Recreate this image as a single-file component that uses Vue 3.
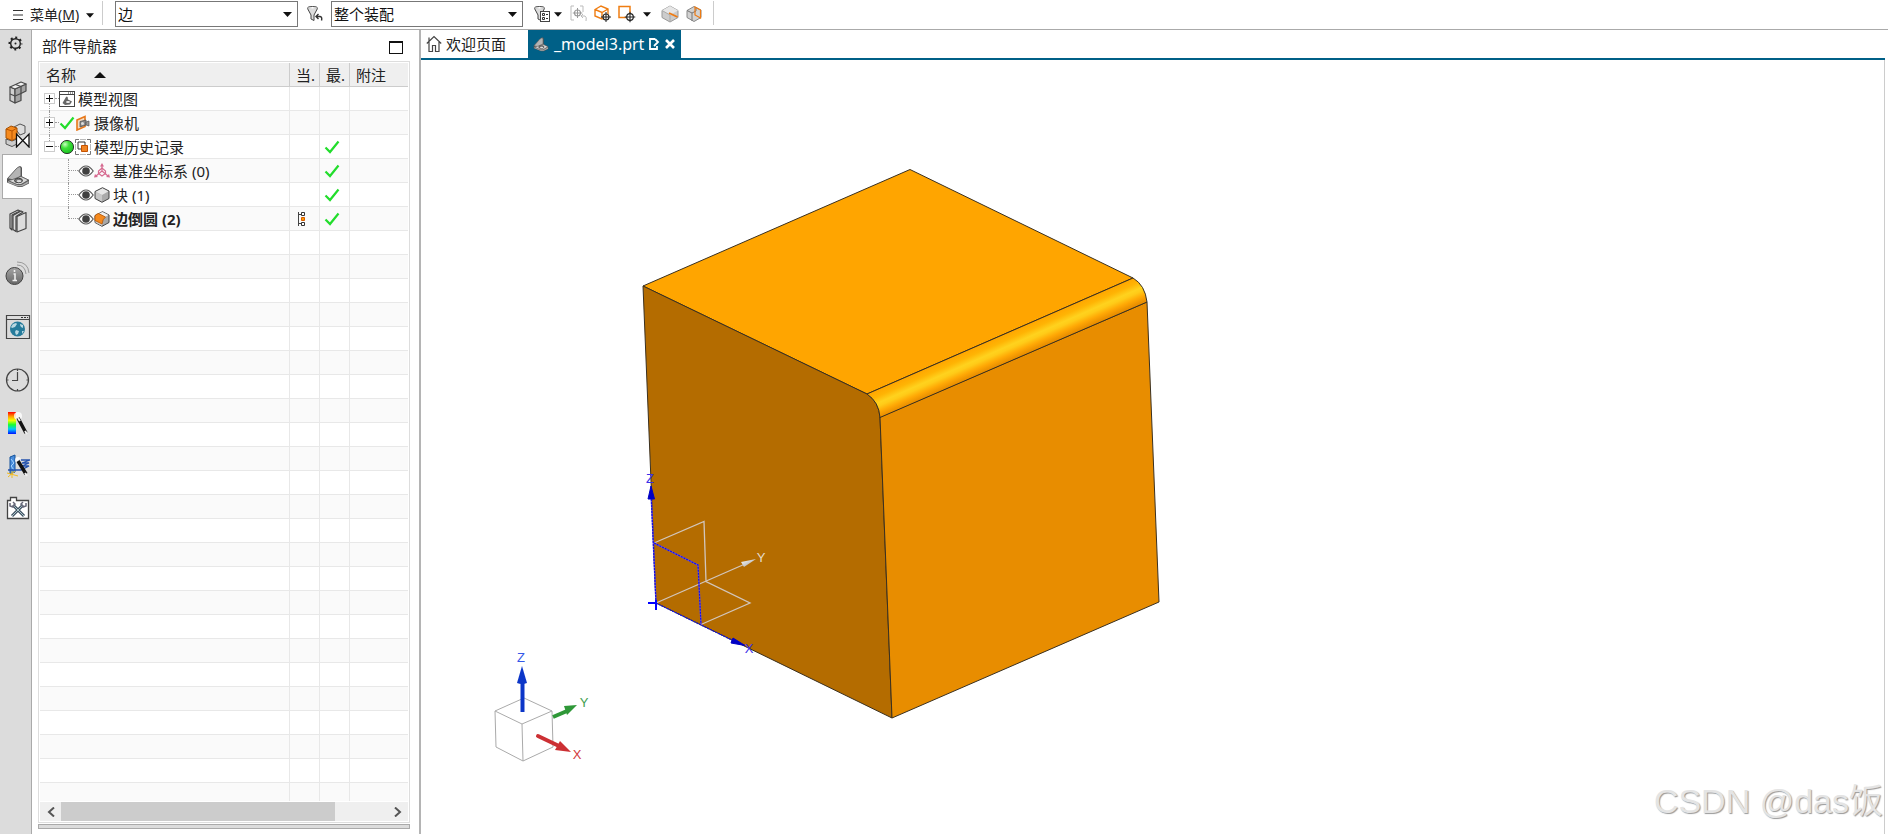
<script setup>
import { ref } from 'vue'

const selectionType = ref('边')
const scope = ref('整个装配')

const railItems = [
  { id: 'assembly', label: '装配导航器' },
  { id: 'constraint', label: '约束导航器' },
  { id: 'part', label: '部件导航器', active: true },
  { id: 'reuse', label: '重用库' },
  { id: 'info', label: '信息', gap: true },
  { id: 'web', label: '浏览器', gap: true },
  { id: 'history', label: '历史记录', gap: true },
  { id: 'visual', label: '可视化' },
  { id: 'studio', label: '工作室' },
  { id: 'roles', label: '角色' }
]

const rows = [
  { id: 1, label: '模型视图', level: 0, toggle: 'plus', icons: ['i-view'] },
  { id: 2, label: '摄像机', level: 0, toggle: 'plus', icons: ['i-check', 'i-camera'] },
  { id: 3, label: '模型历史记录', level: 0, toggle: 'minus', icons: ['i-ball', 'i-history'], latest: true },
  { id: 4, label: '基准坐标系 (0)', level: 1, icons: ['i-eye', 'i-csys'], latest: true },
  { id: 5, label: '块 (1)', level: 1, icons: ['i-eye', 'i-block'], latest: true },
  { id: 6, label: '边倒圆 (2)', level: 1, icons: ['i-eye', 'i-blend'], latest: true, current: true, last: true }
]
const emptyRows = 24
</script>

<template>
  <div class="app">
    <svg class="defs" aria-hidden="true">
      <defs>
        <radialGradient id="green" cx=".35" cy=".3" r=".75">
          <stop offset="0" stop-color="#c8ffc0" /><stop offset=".4" stop-color="#3fe03a" /><stop offset="1" stop-color="#18c020" />
        </radialGradient>
        <linearGradient id="rainbow" x1="0" y1="0" x2="0" y2="1">
          <stop offset="0" stop-color="#f00" /><stop offset=".2" stop-color="#ff9a00" /><stop offset=".38" stop-color="#f4ff00" />
          <stop offset=".58" stop-color="#18ff30" /><stop offset=".78" stop-color="#00c8ff" /><stop offset="1" stop-color="#0010ff" />
        </linearGradient>
        <linearGradient id="info" x1="0" y1="0" x2="0" y2="1">
          <stop offset="0" stop-color="#a5a5a5" /><stop offset="1" stop-color="#666" />
        </linearGradient>
      </defs>
      <symbol id="i-caret" viewBox="0 0 9 5"><path d="M0 0h9L4.500 5z" fill="#111" /></symbol>
      <symbol id="i-check" viewBox="0 0 16 16"><path d="M1.500 8.500 6 13 14.500 2.500" fill="none" stroke="#22dd2c" stroke-width="2.200" /></symbol>
      <symbol id="i-view" viewBox="0 0 16 16">
        <rect x=".5" y=".5" width="15" height="15" fill="#fff" stroke="#444" /><path d="M1 3.500h14" stroke="#444" />
        <path d="M9 2h1M11 2h1M13 2h1" stroke="#333" />
        <path d="M7 6Q9 4.500 9 8.500L13 10.500 11 13.500 6 14 3.500 12z" fill="#666" /><ellipse cx="9" cy="11" rx="2" ry="1" fill="#eee" />
      </symbol>
      <symbol id="i-camera" viewBox="0 0 16 16">
        <path d="M2 5 10 1.500v10L2 15z" fill="#f4dcc4" stroke="#e8781a" stroke-width="1.600" />
        <path d="M5 6.500 11 5v5L5 12z" fill="#888" stroke="#555" stroke-width=".8" /><path d="m11 7 3-1v5l-3-1z" fill="#999" stroke="#555" stroke-width=".7" />
        <circle cx="7.500" cy="8.500" r="1.500" fill="#ddd" />
      </symbol>
      <symbol id="i-ball" viewBox="0 0 16 16"><circle cx="8" cy="8" r="6.600" fill="url(#green)" stroke="#222" stroke-width=".9" /></symbol>
      <symbol id="i-history" viewBox="0 0 16 16">
        <path d="M.5 4V.500H4M12 .5h3.500V4M15.500 12v3.500H12M4 15.500H.5V12" fill="none" stroke="#777" /><path d="M5 .5h6M5 15.500h6M.5 5v6M15.500 5v6" stroke="#bbb" />
        <path d="M3 3h7v7H3z" fill="#fff" stroke="#333" /><path d="M6.500 6.500h6v6h-6z" fill="#f08424" stroke="#c65200" />
      </symbol>
      <symbol id="i-eye" viewBox="0 0 16 16">
        <path d="M.8 8Q8-2 15.200 8 8 18 .8 8z" fill="#fff" stroke="#555" stroke-width="1.200" /><circle cx="8" cy="8" r="3.800" fill="#404040" />
      </symbol>
      <symbol id="i-csys" viewBox="0 0 16 16">
        <g fill="none" stroke="#d66a90" stroke-width="1.200"><path d="M8 2v6L2 13M8 8l6 5" /><path d="M4.500 10.500V8L8 5l3.500 3v2.500L8 13z" /></g>
        <path d="m8 0 2 3.500H6zM0 14.500 1 11l3 3zM16 14.500 15 11l-3 3z" fill="#d66a90" />
      </symbol>
      <symbol id="i-block" viewBox="0 0 16 16">
        <path d="M1 4.500 8.500.7 15 4v7.500L8 15.300 1 11.500z" fill="#aaa" /><path d="M1 4.500 8.500.7 15 4 8 8z" fill="#e6e6e6" /><path d="M1 4.500 8 8v7.300L1 11.500z" fill="#c8c8c8" />
        <path d="M1 4.500 8.500.7 15 4v7.500L8 15.300 1 11.500z" fill="none" stroke="#444" />
      </symbol>
      <symbol id="i-blend" viewBox="0 0 16 16">
        <path d="M1 4.500 8.500.7 15 4v7.500L8 15.300 1 11.500z" fill="#a8a8a8" stroke="#444" /><path d="M5 2.500 8.500 1 14.500 4 11 6z" fill="#eee" /><path d="M1.500 9.500 8 13v2L1.500 11.500z" fill="#ccc" />
        <path d="M1 5Q2 3 4.500 2.500L11.500 6Q8.500 8 8 13L1 9.500z" fill="#f58a1e" stroke="#b85400" stroke-width=".8" />
      </symbol>
      <symbol id="i-bracket" viewBox="0 0 24 24">
        <path d="M1 15 12 3.500Q15 .8 16 4v8.500L23 16v3.500L16 23H12L1 18.500z" fill="#555" />
        <path d="M1.500 14.500 10 5Q14 1 15 4v8L7.500 16z" fill="#b4b4b4" stroke="#555" stroke-width=".8" /><path d="m15 12.500 7.500 3.500L15 20.500H11L2 16.500l4.500-1z" fill="#d8d8d8" stroke="#555" stroke-width=".8" />
        <path d="M2 17v1.500L11.500 22.300H16L22.500 19V17L15.500 21H11z" fill="#aaa" /><ellipse cx="12.500" cy="16.500" rx="4" ry="2.200" fill="#777" stroke="#444" /><ellipse cx="13" cy="17.200" rx="2.400" ry="1.100" fill="#ddd" />
      </symbol>
      <symbol id="i-target" viewBox="0 0 10 10"><circle cx="5" cy="5" r="3" fill="none" stroke="currentColor" stroke-width="1.100" /><path d="M5 0v10M0 5h10" stroke="currentColor" /></symbol>
      <symbol id="i-funnel" viewBox="0 0 18 18">
        <ellipse cx="6.500" cy="3" rx="5" ry="1.500" fill="#fff" stroke="#444" /><path d="M1.500 3.500 5 10v4l3 1.500V10l3.500-6.500" fill="#ddd" stroke="#444" />
      </symbol>
      <symbol id="i-cube-outline" viewBox="0 0 16 16"><path d="M1 4.500 7 1l7 3v6.500L8 14l-7-3zM1 4.500 8 7.500 14 4M8 7.500V14" fill="none" stroke="#ef7d12" stroke-width="1.400" /></symbol>
    </svg>

    <header class="toolbar">
      <button class="menu" type="button">
        <svg width="10" height="10" viewBox="0 0 10 10"><path d="M0 .5h10M0 5h10M0 9.500h10" stroke="#333" /></svg>
        <span>菜单(<u>M</u>)</span>
        <svg class="caret"><use href="#i-caret" /></svg>
      </button>
      <span class="divider"></span>
      <div class="combo type">
        <select v-model="selectionType" aria-label="类型过滤器"><option>边</option><option>面</option></select>
        <svg class="caret"><use href="#i-caret" /></svg>
      </div>
      <button class="tool filter" type="button" aria-label="重置过滤器">
        <svg width="18" height="18" viewBox="0 0 18 18"><use href="#i-funnel" /><path d="m12.500 9-2.500 2.500 2.500 2.500M10 11.500h4q2.500.5 1.500 4" fill="none" stroke="#333" stroke-width="1.400" /></svg>
      </button>
      <div class="combo scope">
        <select v-model="scope" aria-label="选择范围"><option>整个装配</option><option>仅在工作部件内</option></select>
        <svg class="caret"><use href="#i-caret" /></svg>
      </div>
      <div class="tools">
        <button class="tool drop" type="button" aria-label="过滤选项">
          <svg width="18" height="18" viewBox="0 0 18 18"><use href="#i-funnel" /><rect x="7.500" y="6.500" width="9" height="10" fill="#fff" stroke="#444" /><path d="M9.500 8.500h2v2h-2zM9.500 12.500h2v2h-2zM13 9.500h2M13 13.500h2" fill="none" stroke="#333" /></svg>
          <svg class="caret"><use href="#i-caret" /></svg>
        </button>
        <button class="tool muted" type="button" aria-label="取消选择">
          <svg width="18" height="18" viewBox="0 0 18 18"><path d="M4 1H1v14h3M10 1h3v6M13 9l-2 2 2 2M11 11h4q2 1 1 5" fill="none" stroke="#bbb" /><use href="#i-target" x="2.500" y="3" width="10" height="10" /></svg>
        </button>
        <button class="tool" type="button" aria-label="选择体">
          <svg width="18" height="18" viewBox="0 0 18 18"><use href="#i-cube-outline" width="16" height="16" /><circle cx="12" cy="12" r="3.500" fill="#fff" opacity=".8" /><use href="#i-target" x="7" y="7" width="10" height="10" /></svg>
        </button>
        <button class="tool drop wide" type="button" aria-label="矩形选择">
          <svg width="18" height="18" viewBox="0 0 18 18"><path d="M1 1.500h11v11H1z" fill="none" stroke="#ef7d12" stroke-width="1.500" /><circle cx="12" cy="12" r="4" fill="#fff" /><use href="#i-target" x="6.500" y="6.500" width="11" height="11" /></svg>
          <svg class="caret"><use href="#i-caret" /></svg>
        </button>
        <button class="tool" type="button" aria-label="高亮隐藏边">
          <svg width="18" height="18" viewBox="0 0 18 18"><path d="M1 5.500 9 1l8 4.500v7L9 17l-8-4.500z" fill="#ccc" stroke="#999" /><path d="M1 5.500 9 1l8 4.500L9 10z" fill="#e6e6e6" /><path d="M1 5.500 9 10v7" fill="none" stroke="#aaa" /><path d="m8 8 8.500 4" stroke="#ee7b13" stroke-width="1.800" /></svg>
        </button>
        <button class="tool" type="button" aria-label="显示边">
          <svg width="18" height="18" viewBox="0 0 18 18"><path d="M2 5.500 9 1.500l7 3.500v7.500L9 16.500l-7-4z" fill="#d2d2d2" stroke="#888" /><path d="M7 8v8M2 5.500 7 8l4-2V2" stroke="#777" fill="none" /><path d="M10 2v8l5.500 3V5z" fill="none" stroke="#ee7b13" stroke-width="1.200" /></svg>
        </button>
        <span class="divider"></span>
      </div>
    </header>

    <div class="workspace">
      <nav class="rail" aria-label="资源条">
        <button class="gear" type="button" aria-label="设置">
          <svg width="15" height="15" viewBox="0 0 15 15"><circle cx="7.500" cy="7.500" r="4.800" fill="none" stroke="#222" stroke-width="1.400" /><circle cx="7.500" cy="7.500" r="6" fill="none" stroke="#222" stroke-width="2" stroke-dasharray="2 2.710" stroke-dashoffset="1" /><circle cx="7.500" cy="7.500" r="1" fill="#222" /></svg>
        </button>
        <button v-for="item in railItems" :key="item.id" type="button" :aria-label="item.label" :class="{ active: item.active, gap: item.gap }">
          <svg width="26" height="26" viewBox="0 0 26 26">
            <g v-if="item.id === 'assembly'" stroke="#4a4a4a" stroke-width="1.200" stroke-linejoin="round">
              <path d="M5 8 10 10v14l-5-2.500z" fill="#d0d0d0" /><path d="M10 10 21 5v7l-5 2.500v7L10 24z" fill="#a4a4a4" /><path d="M5 8 16 3l5 2-11 5z" fill="#f0f0f0" /><path d="m5 15 5 2 6-2.500v-7l-5.500-2" fill="none" />
            </g>
            <g v-else-if="item.id === 'constraint'" stroke="#555">
              <path d="m9 5 6-3 5 2v7l-5 2z" fill="#ddd" /><path d="m1 17 6 2 5-2v5l-5 2.500L1 22z" fill="#ccc" /><path d="m1 7 5-3 6 2v10l-5 2.500L1 16z" fill="#f58a1e" stroke="#a65000" /><path d="m1 7 6 2 5-3M7 9v9" fill="none" stroke="#b85400" />
              <path d="M11.500 12v13L24 12v13z" fill="#fff" stroke="#111" stroke-width="1.300" />
            </g>
            <use v-else-if="item.id === 'part'" href="#i-bracket" x="1" y="0" width="24" height="24" />
            <g v-else-if="item.id === 'reuse'" fill="#ddd" stroke="#444" stroke-width="1.200" stroke-linejoin="round">
              <path d="M5 6 13 2l2 1-8 4v15l-2-2z" /><path d="M8 7.500 16 3l2 1-7 4.500v15l-3-2z" /><path d="M12 8.500 21 4.500v16L12 24z" />
            </g>
            <g v-else-if="item.id === 'info'">
              <path d="M12 1q11 0 12 11M12 4q8 0 9 9" fill="none" stroke="#999" /><circle cx="9.500" cy="15" r="8.500" fill="url(#info)" stroke="#444" /><path d="M9.500 9v2M8.500 13h1.500v6M7.500 19.500h4.500" fill="none" stroke="#eee" stroke-width="1.600" />
            </g>
            <g v-else-if="item.id === 'web'">
              <path d="M1.500 1.500h23v23h-23z" fill="none" stroke="#444" stroke-width="1.200" /><path d="M2 5.500h22" stroke="#444" /><path d="M16 3.500h2M19 3.500h2M22 3.500h1" stroke="#333" /><circle cx="12.500" cy="15" r="7.500" fill="#267b9b" />
              <path d="m8 10 3-1 1 1-2 3-3 1-1-1zM15 10l3 1v3l-2-1-1-2zM11 16l3 1-1 3-2 1-1-3zM17 17h2l-2 3z" fill="#b9d8e2" />
            </g>
            <g v-else-if="item.id === 'history'" fill="none" stroke="#444" stroke-width="1.200">
              <circle cx="12.500" cy="13" r="11" /><path d="M12.500 5v8.500H7M12.500 2v2M12.500 22v2M1.500 13h2M21.500 13h2" />
            </g>
            <g v-else-if="item.id === 'visual'">
              <path d="M3 2h8v22H3z" fill="url(#rainbow)" /><circle cx="13" cy="6" r="4" fill="#fff" opacity=".8" /><path d="m13 8 8 15" stroke="#111" stroke-width="3.500" /><path d="m13 8 2 3M20 21l2 3" stroke="#eee" stroke-width="2" />
            </g>
            <g v-else-if="item.id === 'studio'">
              <path d="m5 4 5-2v17l-5 2z" fill="#4a8ddb" stroke="#15539c" /><path d="m6 6 3 4-3 3 3 4" stroke="#a6d4ff" fill="none" /><path d="M14 7h11l-8 3h7l-7 3h7l-8 4H3" stroke="#2452ac" fill="none" stroke-width="1.300" /><path d="m2 20 11 3M3 24l7-6M7 18v7" stroke="#f2bd24" />
              <circle cx="13" cy="7" r="3" fill="#fff" opacity=".8" /><path d="m13 8 8 13" stroke="#111" stroke-width="3.500" /><path d="m20 20 2 3" stroke="#eee" stroke-width="2" />
            </g>
            <g v-else>
              <path d="M2.500 4.500h3V1.500h6v3h12v18h-21z" fill="#fff" stroke="#444" stroke-width="1.300" /><path d="m8 9 11 11M18 9 7 20" stroke="#456" stroke-width="3" /><path d="m8 9 11 11M18 9 7 20" stroke="#a9c4c8" /><path d="M5 7v3l3 1 2-3-2-2M21 7v3l-3 1-2-3 2-2" fill="none" stroke="#667" stroke-width="1.500" />
            </g>
          </svg>
        </button>
      </nav>

      <aside class="panel">
        <div class="panel-title">
          <span>部件导航器</span>
          <button type="button" aria-label="最大化"></button>
        </div>
        <div class="tree-box">
          <div class="tree-view">
            <table>
              <colgroup><col class="c-name" /><col class="c-flag" /><col class="c-flag" /><col /></colgroup>
              <thead>
                <tr><th><span>名称</span><svg width="12" height="6" viewBox="0 0 12 6"><path d="M6 0 12 6H0z" fill="#111" /></svg></th><th>当.</th><th>最.</th><th>附注</th></tr>
              </thead>
              <tbody>
                <tr v-for="row in rows" :key="row.id">
                  <td>
                    <div class="node" :class="['level' + row.level, { last: row.last, strong: row.current }]">
                      <button v-if="row.toggle" class="toggle" type="button" :aria-label="row.toggle === 'plus' ? '展开' : '折叠'">
                        <svg width="11" height="11" viewBox="0 0 11 11"><rect x=".5" y=".5" width="10" height="10" fill="#fff" stroke="#ccc" /><path :d="row.toggle === 'plus' ? 'M2 5.500h7M5.500 2v7' : 'M2 5.500h7'" stroke="#111" /></svg>
                      </button>
                      <span class="link"></span>
                      <svg v-for="icon in row.icons" :key="icon" width="16" height="16"><use :href="'#' + icon" /></svg>
                      <span class="label">{{ row.label }}</span>
                    </div>
                  </td>
                  <td class="flag">
                    <svg v-if="row.current" width="9" height="14" viewBox="0 0 9 14"><path d="M1.500 0v14M1 2.500h3M1 11.500h3" stroke="#444" /><path d="M4.500.5h3v3h-3zM4.500 10.500h3v3h-3z" fill="#fff" stroke="#333" /><path d="M4.500 5.500h3v3h-3z" fill="#f90" stroke="#d65c00" /></svg>
                  </td>
                  <td class="flag"><svg v-if="row.latest" width="16" height="16"><use href="#i-check" /></svg></td>
                  <td></td>
                </tr>
                <tr v-for="n in emptyRows" :key="'e' + n"><td></td><td></td><td></td><td></td></tr>
              </tbody>
            </table>
          </div>
          <div class="scrollbar">
            <button type="button" aria-label="向左滚动"><svg width="8" height="10" viewBox="0 0 8 10"><path d="M7 .5 2 5l5 4.500" fill="none" stroke="#555" stroke-width="2" /></svg></button>
            <div class="track"><div class="thumb"></div></div>
            <button type="button" aria-label="向右滚动"><svg width="8" height="10" viewBox="0 0 8 10"><path d="m1 .5 5 4.500-5 4.500" fill="none" stroke="#555" stroke-width="2" /></svg></button>
          </div>
        </div>
        <div class="splitter"></div>
      </aside>

      <main class="stage">
        <div class="tabs">
          <button class="tab" type="button">
            <svg width="16" height="18" viewBox="0 0 16 18"><path d="M.8 8.500 8 1.500l7.200 7M3 7v9.500h3.500v-6h3v6H13V7M3 6V2.500" fill="none" stroke="#444" stroke-width="1.200" /></svg>
            <span>欢迎页面</span>
          </button>
          <div class="tab current">
            <svg width="16" height="16"><use href="#i-bracket" /></svg>
            <span>_model3.prt</span>
            <svg width="11" height="12" viewBox="0 0 11 12"><path d="M6 1H1v10h7V8M6 1l3 3-4 4M6 1l2 2" fill="none" stroke="#fff" stroke-width="1.800" /></svg>
            <button type="button" aria-label="关闭"><svg width="10" height="10" viewBox="0 0 10 10"><path d="m1 1 8 8M9 1 1 9" stroke="#fff" stroke-width="2.600" /></svg></button>
          </div>
        </div>
        <div class="viewport">
          <svg class="scene" viewBox="421 60 1463 774" preserveAspectRatio="xMinYMin meet" role="img" aria-label="模型">
            <defs>
              <linearGradient id="fillet" gradientUnits="userSpaceOnUse" x1="867" y1="394" x2="877.500" y2="418">
                <stop offset="0" stop-color="#ffa500" /><stop offset=".25" stop-color="#ffb404" /><stop offset=".48" stop-color="#ffd21e" /><stop offset=".6" stop-color="#ffcb18" /><stop offset=".8" stop-color="#ffa805" /><stop offset="1" stop-color="#ea8f00" />
              </linearGradient>
              <linearGradient id="cone" x1="0" y1="0" x2="1" y2="1"><stop offset="0" stop-color="#fff" /><stop offset="1" stop-color="#999" /></linearGradient>
            </defs>
            <g stroke="#3a3020" stroke-width="1" stroke-linejoin="round">
              <path d="M910 169.500 1133 278 867 394 643 286z" fill="#ffa500" />
              <path d="M643 286 867 394Q879 402 880 417L892 718 656 603z" fill="#b46c00" />
              <path d="M880 417 1147 302 1159 602 892 718z" fill="#e88d00" />
              <path d="M867 394 1133 278Q1145 285 1147 302L880 417.500Q879 402 867 394z" fill="url(#fillet)" />
            </g>
            <g fill="none" stroke="#d2c6bc" stroke-width="1.300">
              <path d="M656 603 745 564M654 543 704 521.500 706 581.500 750 603 701 624.500" />
            </g>
            <g fill="none" stroke="#7a58c8" stroke-width="1.400"><path d="M656 603 651 492M654 543 698 565 701 624.500" /></g>
            <g fill="none" stroke="#1010e8" stroke-width="1.200" stroke-dasharray="2 1"><path d="M656 603 651 492M654 543 698 565 701 624.500M656 603 740 644" /></g>
            <path d="M648 603h9M656 600v10" stroke="#00f" stroke-width="2" />
            <path d="M648 499 651 486 654.500 499zM733 638 745 645.500 731 643z" fill="#0000c4" stroke="#0000c4" />
            <path d="m741 562 15-3-12 8z" fill="url(#cone)" />
            <g class="axis" text-anchor="middle">
              <text x="650" y="483" fill="#3a30e8">Z</text><text x="761" y="562" fill="#e6dccc">Y</text><text x="749" y="653" fill="#3a30e8">X</text>
            </g>
            <g fill="none" stroke="#aaa"><path d="M524 698 552 711 553 747 523 761 496 747 495 711zM495 711 522 724 552 711M522 724 523 761" /></g>
            <path d="M522.500 712V683" stroke="#0c36c8" stroke-width="4" /><path d="m522 666 5 17q-5 2-10 0z" fill="#0c36c8" />
            <path d="m553 717 14-6" stroke="#2f9838" stroke-width="4" /><path d="m564 706 13-1-10 10z" fill="#2f9838" />
            <path d="m538 736 21 10" stroke="#cc3034" stroke-width="4" stroke-linecap="round" /><path d="m560 741 11 11-16-2z" fill="#cc3034" />
            <g class="axis" text-anchor="middle"><text x="521" y="662" fill="#3558e8">Z</text><text x="584" y="707" fill="#43a050">Y</text><text x="577" y="759" fill="#d23a3a">X</text></g>
          </svg>
          <span class="watermark">CSDN @das饭</span>
        </div>
      </main>
    </div>
  </div>
</template>

<style>
body { background: #fff; }
</style>

<style scoped>
.app { height: 100vh; display: flex; flex-direction: column; overflow: hidden; background: #fff; color: #222; font: 15px/20px "Noto Sans", "Noto Sans CJK SC", sans-serif; }
.app *, .app *::before, .app *::after { box-sizing: border-box; }
.defs { position: absolute; width: 0; height: 0; }
svg { display: block; flex: none; }
button { display: flex; align-items: center; justify-content: center; padding: 0; border: 0; background: none; color: inherit; font: inherit; }
.caret { width: 8px; height: 5px; }

.toolbar { display: flex; align-items: flex-start; flex: none; height: 30px; padding-top: 1px; border-bottom: 1px solid #aaa; }
.menu { height: 28px; gap: 7px; padding-left: 13px; white-space: nowrap; font-size: 14px; }
.divider { width: 1px; height: 24px; margin-left: 8px; background: #ccc; }
.combo { position: relative; height: 26px; }
.type { width: 183px; margin-left: 12px; }
.scope { width: 192px; }
.combo select { width: 100%; height: 100%; padding: 0 20px 0 2px; border: 1px solid #777; border-radius: 0; appearance: none; background: #fff; color: #111; font: inherit; }
.combo .caret { position: absolute; right: 6px; top: 11px; width: 9px; pointer-events: none; }
.tool { height: 26px; }
.filter { width: 33px; }
.tools { display: flex; gap: 6px; padding-left: 10px; }
.tools .divider { margin-left: 4px; }
.drop { gap: 3px; margin-right: 2px; }
.wide { gap: 7px; margin-right: 4px; }
.muted { color: #999; }

.workspace { display: flex; flex: 1; min-height: 0; }
.rail { flex: none; width: 32px; border-right: 1px solid #aaa; background: #dcdcdc; }
.rail button { width: 31px; height: 43px; padding-left: 4px; }
.rail .gear { height: 26px; margin-bottom: 14px; padding: 0; }
.rail .gap { margin-top: 10px; }
.rail .active { width: 30px; height: 45px; margin: -2px 0 0 2px; padding: 0; background: #fff; border: 1px solid #aaa; border-right: 0; }

.panel { flex: none; display: flex; flex-direction: column; width: 389px; padding: 0 9px 5px 6px; border-right: 2px solid #b4b4b4; }
.panel-title { display: flex; align-items: center; justify-content: space-between; flex: none; height: 31px; padding: 0 7px 0 4px; }
.panel-title button { width: 14px; height: 13px; margin-top: 3px; border: 1px solid #111; border-top-width: 2px; }
.tree-box { display: flex; flex-direction: column; flex: 1; min-height: 0; padding: 1px; border: 1px solid #ddd; }
.tree-view { flex: 1; min-height: 0; overflow: hidden; }
table { width: 100%; table-layout: fixed; border-collapse: separate; border-spacing: 0; }
.c-name { width: 250px; }
.c-flag { width: 30px; }
th, td { height: 24px; padding: 0; border-right: 1px solid #e8e8e8; border-bottom: 1px solid #e8e8e8; text-align: left; }
th { padding-left: 6px; border-color: #ccc; background: #efefef; font-weight: 400; white-space: nowrap; line-height: 20px; }
th svg { display: inline-block; margin-left: 18px; vertical-align: 3px; }
th:last-child, td:last-child { border-right: 0; }
tbody tr:nth-child(even) { background: #fafafa; }
.flag svg { margin-left: 4px; }
.flag svg[width="9"] { margin-left: 7px; }
.node { position: relative; display: flex; align-items: center; height: 23px; white-space: nowrap; }
.level0 { padding-left: 4px; }
.level1 { padding-left: 28px; }
.toggle { z-index: 1; width: 11px; height: 11px; }
.link { width: 4px; border-top: 1px dotted #999; }
.level1 .link { width: 10px; }
.level1::before { content: ""; position: absolute; left: 28px; top: 0; height: 24px; border-left: 1px dotted #999; }
.level1.last::before { height: 12px; }
.level0::before { content: ""; position: absolute; left: 9px; top: 0; height: 24px; border-left: 1px dotted #999; }
tr:nth-child(1) .level0::before { top: 12px; height: 12px; }
tr:nth-child(3) .level0::before { height: 12px; }
.label { margin-left: 3px; }
.strong { font-weight: 700; }
.scrollbar { display: flex; flex: none; height: 20px; border-top: 1px solid #fff; background: #efefef; }
.scrollbar button { width: 21px; }
.track { flex: 1; }
.thumb { width: 84%; height: 100%; background: #ccc; }
.splitter { flex: none; height: 5px; margin-top: 1px; border: 1px solid #aaa; background: #dcdcdc; }

.stage { display: flex; flex: 1; flex-direction: column; min-width: 0; padding-right: 3px; }
.tabs { display: flex; flex: none; height: 30px; border-bottom: 2px solid #006087; }
.tab { display: flex; align-items: center; gap: 4px; width: 107px; padding-left: 5px; justify-content: flex-start; white-space: nowrap; }
.current { width: 153px; background: #006087; color: #fff; gap: 5px; font-size: 16px; }
.viewport { position: relative; flex: 1; min-height: 0; overflow: hidden; border-right: 1px solid #ccc; }
.scene { width: 100%; height: 100%; }
.axis { font: 13px "Liberation Sans", Arial, sans-serif; }
.watermark { position: absolute; right: 1px; bottom: 13px; color: #e4e4e4; font: 34px/40px "Liberation Sans", "Noto Sans CJK SC", sans-serif; text-shadow: 1px 1px 1px #999; }
</style>
